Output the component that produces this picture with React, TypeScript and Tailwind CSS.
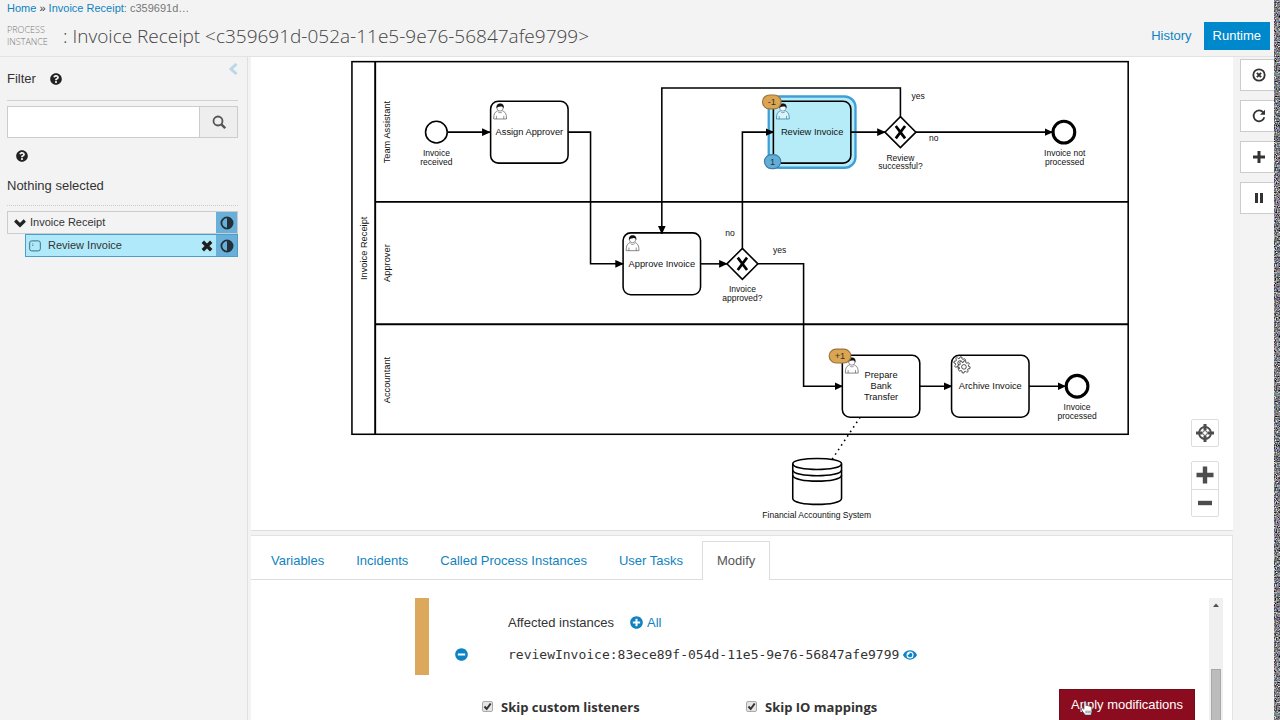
import { ReactNode, useState } from "react";
import { FaEye, FaMinusCircle, FaPlusCircle, FaQuestionCircle } from "react-icons/fa";

interface TaskProps {
  x: number;
  y: number;
  lines: string[];
  type?: "user" | "service";
  selected?: boolean;
}

interface LabelProps {
  x: number;
  y: number;
  lines: string[];
  size?: 11 | 12;
}

interface BadgeProps {
  x: number;
  y: number;
  width: number;
  text: string;
  fill: string;
  stroke: string;
}

const TABS = [
  "Variables",
  "Incidents",
  "Called Process Instances",
  "User Tasks",
  "Modify",
];

const FLOWS = [
  "M254 97H308",
  "M409 97H438V267H480",
  "M580 267H614",
  "M634 247V97H674",
  "M654 267H713V425H763",
  "M774 97H818",
  "M838 77V40H530V228",
  "M858 97H1034",
  "M863 425H904",
  "M1004 425H1051",
];

const TEETH = 8;

// outline of a cog wheel around 0,0: two outer and two inner points per tooth
const gearPath = (outer: number, inner: number) => {
  const step = (Math.PI * 2) / TEETH;
  const points: string[] = [];
  for (let i = 0; i < TEETH; i++) {
    [
      [outer, 0],
      [outer, 0.4],
      [inner, 0.52],
      [inner, 0.88],
    ].forEach(([r, offset]) => {
      const angle = (i + offset) * step;
      points.push(`${(Math.cos(angle) * r).toFixed(2)} ${(Math.sin(angle) * r).toFixed(2)}`);
    });
  }
  return `M${points.join("L")}z`;
};

const AdjustIcon = () => (
  <svg viewBox="0 0 14 14" className="size-3.5" fill="none">
    <circle cx="7" cy="7" r="5.6" stroke="#24303a" strokeWidth="1.8" />
    <path d="M7 1.4a5.6 5.6 0 0 1 0 11.2z" fill="#24303a" />
  </svg>
);

const ChevronLeftIcon = () => (
  <svg viewBox="0 0 12 12" className="size-3" fill="none" stroke="#bcd7ea">
    <path d="M10.500 1L5 6l5.500 5" strokeWidth="3" />
  </svg>
);

const ChevronDownIcon = () => (
  <svg viewBox="0 0 12 12" className="size-3" fill="none" stroke="#222">
    <path d="M1.200 3.500L6 8.200l4.800-4.700" strokeWidth="3.200" />
  </svg>
);

const RemoveIcon = () => (
  <svg viewBox="0 0 12 12" className="size-3" fill="none" stroke="#1d1d1d">
    <path d="M1.800 1.800l8.400 8.400M10.200 1.800l-8.400 8.400" strokeWidth="3.400" />
  </svg>
);

const SearchIcon = () => (
  <svg viewBox="0 0 14 14" className="size-3.5" fill="none" stroke="#555">
    <circle cx="6" cy="6" r="4.5" strokeWidth="1.8" />
    <path d="M9.2 9.2l4 4" strokeWidth="2.4" />
  </svg>
);

const CancelIcon = () => (
  <svg viewBox="0 0 14 14" className="size-3.5" fill="none" stroke="#333">
    <circle cx="7" cy="7" r="5.7" strokeWidth="1.8" />
    <path d="M4.9 4.9l4.2 4.2M9.1 4.9L4.9 9.1" strokeWidth="2" />
  </svg>
);

const RepeatIcon = () => (
  <svg viewBox="0 0 14 14" className="size-3.5" fill="none">
    <path
      d="M11.2 3.4A5.4 5.4 0 1 0 12.3 8.2"
      stroke="#333"
      strokeWidth="1.8"
    />
    <path d="M13 .8v5H8z" fill="#333" />
  </svg>
);

const PlusIcon = () => (
  <svg viewBox="0 0 14 14" className="size-3.5" stroke="#333">
    <path d="M7 1v12M1 7h12" strokeWidth="3" />
  </svg>
);

const PauseIcon = () => (
  <svg viewBox="0 0 14 14" className="size-3.5" fill="#333">
    <path d="M3 2h3v10H3zM8 2h3v10H8z" />
  </svg>
);

const TargetIcon = () => (
  <svg viewBox="0 0 20 20" className="size-5" fill="none" stroke="#4d4d4d">
    <circle cx="10" cy="10" r="6" strokeWidth="1.8" />
    <circle cx="10" cy="10" r="2.4" strokeWidth="1" />
    <path d="M10 1v6M10 13v6M1 10h6M13 10h6" strokeWidth="3" />
  </svg>
);

const ZoomInIcon = () => (
  <svg viewBox="0 0 20 20" className="size-5" stroke="#4d4d4d">
    <path d="M10 1.500v17M1.500 10h17" strokeWidth="4.400" />
  </svg>
);

const ZoomOutIcon = () => (
  <svg viewBox="0 0 20 20" className="size-5" stroke="#4d4d4d">
    <path d="M3 10h14" strokeWidth="4.4" />
  </svg>
);

const HandCursor = () => (
  <svg
    viewBox="0 0 14 18"
    className="pointer-events-none absolute top-2.5 left-5 h-4 w-3.5"
    fill="#fff"
    stroke="#333"
    strokeWidth=".8"
  >
    <path d="M3.5 10V2.2C3.5.6 6 .6 6 2.2V6.5c.6-.8 2-.6 2.3.3.7-.6 1.9-.3 2.1.6.8-.5 2.1 0 2.1 1.2V13c0 1.5-.8 2-.8 4H4.6c0-1.6-1.7-2.4-3-4.6-.8-1.4-1.4-2.4-.7-3 .9-.7 1.8 0 2.6 1z" />
    <path d="M6 12v3M8.2 12v3M10.4 12v3" />
  </svg>
);

const UserGlyph = ({ x, y, color }: { x: number; y: number; color: string }) => (
  <g transform={`translate(${x} ${y})`} fill="#fff" stroke={color}>
    <path
      d="M6 9.5C3 11 1 12.5 1 20h16.500c0-7.500-2-9-5-10.500"
      strokeWidth=".9"
      fillOpacity=".5"
    />
    <path d="M4.500 20v-4M14 20v-4M6.500 10.500c1.500 2 4 2 5.500 0" strokeWidth=".8" fill="none" />
    <circle cx="9.200" cy="5.800" r="4" strokeWidth=".8" />
    <path
      d="M4.600 6.500C4 2.500 6 0 9.300 0s5.500 2.500 4.700 6.500c-1-2.500-2-3-4.500-2.600-2.500.3-4 .6-4.900 2.600z"
      fill="#111"
      stroke="none"
    />
  </g>
);

const GearGlyph = ({ x, y }: { x: number; y: number }) => (
  <g transform={`translate(${x} ${y})`} fill="#fff" stroke="#222" strokeWidth="1">
    <g transform="translate(8 8)">
      <path d={gearPath(8, 6)} />
      <circle r="3" />
    </g>
    <g transform="translate(13 13)">
      <path d={gearPath(8, 6)} />
      <circle r="3" />
    </g>
  </g>
);

const Label = ({ x, y, lines, size = 11 }: LabelProps) => (
  <text
    textAnchor="middle"
    className={size === 12 ? "text-[12px]" : "text-[11px]"}
    fill="#111"
  >
    {lines.map((line, i) => (
      <tspan key={line} x={x} y={y + i * (size === 12 ? 14 : 11)}>
        {line}
      </tspan>
    ))}
  </text>
);

const LaneLabel = ({ x, y, text }: { x: number; y: number; text: string }) => (
  <text
    transform={`translate(${x} ${y}) rotate(-90)`}
    textAnchor="middle"
    className="text-[12px]"
    fill="#111"
  >
    {text}
  </text>
);

const Task = ({ x, y, lines, type = "user", selected }: TaskProps) => (
  <g>
    {selected ? (
      <rect
        x={x - 6}
        y={y - 6}
        width="112"
        height="92"
        rx="14"
        fill="#b5ecf8"
        stroke="#3f9fd8"
        strokeWidth="3"
      />
    ) : null}
    <rect
      x={x}
      y={y}
      width="100"
      height="80"
      rx="10"
      fill={selected ? "#b5ecf8" : "#fff"}
      stroke="#000"
      strokeWidth="2"
    />
    {type === "user" ? (
      <UserGlyph x={x + 3} y={y + 3} color={selected ? "#2d6f95" : "#555"} />
    ) : (
      <GearGlyph x={x + 3} y={y + 2} />
    )}
    <Label x={x + 50} y={y + 44 - (lines.length - 1) * 7} lines={lines} size={12} />
  </g>
);

const Gateway = ({ x, y }: { x: number; y: number }) => (
  <g transform={`translate(${x} ${y})`}>
    <path d="M0-20L20 0L0 20L-20 0z" fill="#fff" stroke="#000" strokeWidth="2" />
    <path d="M-6-8L6 8M6-8L-6 8" stroke="#000" strokeWidth="3.500" />
  </g>
);

const Badge = ({ x, y, width, text, fill, stroke }: BadgeProps) => (
  <g>
    <rect
      x={x - width / 2}
      y={y - 9}
      width={width}
      height="18"
      rx="9"
      fill={fill}
      stroke={stroke}
      strokeWidth="1.500"
    />
    <text x={x} y={y + 4} textAnchor="middle" className="text-[12px]" fill="#333">
      {text}
    </text>
  </g>
);

const Diagram = () => (
  <svg
    viewBox="0 0 1267 610"
    preserveAspectRatio="xMidYMin meet"
    className="block h-full w-full"
    role="img"
    aria-label="Invoice Receipt process"
  >
    <defs>
      <marker
        id="arrow"
        markerWidth="11"
        markerHeight="10"
        refX="10"
        refY="5"
        orient="auto"
        markerUnits="userSpaceOnUse"
      >
        <path d="M0 0L11 5L0 10z" />
      </marker>
    </defs>

    <g fill="none" stroke="#000" strokeWidth="2">
      <rect x="130" y="6" width="1002" height="481" />
      <path d="M160 6V487" strokeWidth="2.500" />
      <path d="M160 187H1132M160 345H1132" strokeWidth="2.500" />
    </g>
    <LaneLabel x={149} y={247} text="Invoice Receipt" />
    <LaneLabel x={179} y={97} text="Team Assistant" />
    <LaneLabel x={179} y={266} text="Approver" />
    <LaneLabel x={179} y={417} text="Accountant" />

    <path
      d="M786 465L748 522"
      stroke="#000"
      strokeWidth="2"
      strokeDasharray="2 5"
    />
    <Task x={309} y={57} lines={["Assign Approver"]} />
    <Task x={480} y={227} lines={["Approve Invoice"]} />
    <Task x={674} y={57} lines={["Review Invoice"]} selected />
    <Task x={763} y={385} lines={["Prepare", "Bank", "Transfer"]} />
    <Task x={904} y={385} lines={["Archive Invoice"]} type="service" />

    <g fill="none" stroke="#000" strokeWidth="2">
      {FLOWS.map((d) => (
        <path key={d} d={d} markerEnd="url(#arrow)" />
      ))}
    </g>

    <circle cx="239" cy="97" r="14" fill="#fff" stroke="#000" strokeWidth="2" />
    <circle cx="1049" cy="97" r="14" fill="#fff" stroke="#000" strokeWidth="4" />
    <circle cx="1066" cy="425" r="14" fill="#fff" stroke="#000" strokeWidth="4" />
    <Gateway x={634} y={267} />
    <Gateway x={838} y={97} />

    <g fill="#fff" stroke="#000" strokeWidth="2">
      <path d="M699 525v45c0 10 63 10 63 0v-45c0-9-63-9-63 0z" />
      <path
        d="M699 525c0 10 63 10 63 0M699 533c0 10 63 10 63 0M699 540c0 10 63 10 63 0"
        fill="none"
      />
    </g>

    <Label x={239} y={128} lines={["Invoice", "received"]} />
    <Label x={838} y={134} lines={["Review", "successful?"]} />
    <Label x={1050} y={128} lines={["Invoice not", "processed"]} />
    <Label x={634} y={304} lines={["Invoice", "approved?"]} />
    <Label x={1066} y={456} lines={["Invoice", "processed"]} />
    <Label x={730} y={595} lines={["Financial Accounting System"]} />
    <Label x={861} y={54} lines={["yes"]} />
    <Label x={881} y={108} lines={["no"]} />
    <Label x={618} y={231} lines={["no"]} />
    <Label x={682} y={253} lines={["yes"]} />

    <Badge x={672} y={58} width={24} text="-1" fill="#dca552" stroke="#9a7440" />
    <Badge x={673} y={135} width={21} text="1" fill="#62aed8" stroke="#3d7fa8" />
    <Badge x={760} y={386} width={28} text="+1" fill="#dca552" stroke="#9a7440" />
  </svg>
);

const RailButton = ({ label, children }: { label: string; children: ReactNode }) => (
  <button
    type="button"
    aria-label={label}
    className="flex h-8 items-center border border-r-0 border-[#ccc] bg-white pl-[11px]"
  >
    {children}
  </button>
);

const CheckOption = ({ id, label }: { id: string; label: string }) => (
  <label
    htmlFor={id}
    className="flex items-center gap-2 font-['Open_Sans',sans-serif] text-[13px] leading-5 font-bold text-[#333]"
  >
    <span className="grid">
      <input
        id={id}
        type="checkbox"
        defaultChecked
        className="peer col-start-1 row-start-1 size-[11px] appearance-none rounded-xs border border-[#aaa] bg-[#e6e6e6]"
      />
      <svg
        viewBox="0 0 11 11"
        className="pointer-events-none col-start-1 row-start-1 hidden size-[11px] peer-checked:block"
        fill="none"
        stroke="#333"
        strokeWidth="2"
      >
        <path d="M2.500 5.500l2.200 2.500L8.700 2.500" />
      </svg>
    </span>
    {label}
  </label>
);

const Header = () => (
  <header className="flex h-[57px] flex-none flex-col border-b border-[#e3e3e3] pr-1 pl-[7px]">
    <nav aria-label="Breadcrumb" className="text-[11px] leading-4 text-[#777]">
      <a href="#home" className="text-[#0f83c0]">
        Home
      </a>{" "}
      <span className="text-[#333]">»</span>{" "}
      <a href="#definition" className="text-[#0f83c0]">
        Invoice Receipt
      </a>
      : c359691d…
    </nav>
    <div className="flex items-center justify-between">
      <h1 className="flex items-center font-['Open_Sans',sans-serif] text-[19px] leading-10 font-light text-[#444]">
        <span className="flex w-14 flex-col text-[9px] leading-3 text-[#777] uppercase">
          <span>Process</span>
          <span>Instance</span>
        </span>
        : Invoice Receipt &lt;c359691d-052a-11e5-9e76-56847afe9799&gt;
      </h1>
      <div className="flex items-center gap-3">
        <a href="#history" className="text-[#0f83c0]">
          History
        </a>
        <a href="#runtime" className="bg-[#0088cc] px-[9px] py-1 leading-5 text-white">
          Runtime
        </a>
      </div>
    </div>
  </header>
);

const Sidebar = () => (
  <aside className="w-[248px] flex-none border-r border-[#e0e0e0] pr-[9px] pl-[7px]">
    <div className="flex h-11 items-center border-b border-[#d2d2d2]">
      <h2>Filter</h2>
      <FaQuestionCircle className="ml-3.5 size-3 text-[#222]" />
      <button type="button" aria-label="Collapse" className="mb-5 ml-auto">
        <ChevronLeftIcon />
      </button>
    </div>
    <form className="mt-[5px] flex h-8 border border-[#ccc] bg-white">
      <input type="text" aria-label="Filter" className="min-w-0 flex-1 px-2 outline-none" />
      <button
        type="button"
        aria-label="Search"
        className="flex w-[38px] items-center justify-center border-l border-[#ccc] bg-[#eee]"
      >
        <SearchIcon />
      </button>
    </form>
    <FaQuestionCircle className="mt-3 ml-[9px] size-3 text-[#222]" />
    <p className="mt-[15px] border-b border-dotted border-[#ccc] pb-2.5 leading-[18px]">
      Nothing selected
    </p>
    <ul className="mt-[5px] text-[11px]">
      <li>
        <div className="flex h-[23px] items-center border border-[#ccc] pl-1.5">
          <ChevronDownIcon />
          <span className="ml-1">Invoice Receipt</span>
          <span className="ml-auto flex h-full w-[21px] items-center justify-center bg-[#68b0d9]">
            <AdjustIcon />
          </span>
        </div>
        <ul className="pl-[18px]">
          <li className="flex h-[23px] items-center border border-[#4a9fcb] bg-[#b0eafa] pl-[3px]">
            <svg viewBox="0 0 12 12" className="size-3" fill="none" stroke="#3d6f85">
              <rect x=".7" y=".9" width="10.600" height="10" rx="2" />
              <path d="M3 4h1.500M3 5.500h1.500" strokeWidth=".6" />
            </svg>
            <span className="ml-[7px]">Review Invoice</span>
            <button type="button" aria-label="Deselect" className="mr-[3px] ml-auto">
              <RemoveIcon />
            </button>
            <span className="flex h-full w-[21px] items-center justify-center bg-[#68b0d9]">
              <AdjustIcon />
            </span>
          </li>
        </ul>
      </li>
    </ul>
  </aside>
);

const ModifyPanel = () => (
  <div className="flex min-h-0 flex-1 justify-between overflow-hidden pt-[18px] pr-[9px] pl-[164px]">
    <div className="flex-1">
      <div className="flex h-[77px]">
        <div className="w-3.5 bg-[#dca95c]" />
        <div className="flex w-16 items-end justify-center pb-3.5">
          <button type="button" aria-label="Remove">
            <FaMinusCircle className="block size-[13px] text-[#0d83c4]" />
          </button>
        </div>
        <div className="ml-[15px] pt-[15px]">
          <div className="flex items-center leading-5">
            Affected instances
            <button type="button" className="ml-4 flex items-center gap-1 text-[#0f83c0]">
              <FaPlusCircle className="size-[13px]" />
              All
            </button>
          </div>
          <div className="mt-3 flex items-center leading-5">
            <code className="font-['DejaVu_Sans_Mono',monospace] text-[13px]">
              reviewInvoice:83ece89f-054d-11e5-9e76-56847afe9799
            </code>
            <FaEye className="ml-1 size-3.5 text-[#0d83c4]" />
          </div>
        </div>
      </div>
      <div className="mt-3.5 flex items-start pr-3.5 pl-[67px]">
        <div className="w-[264px] pt-2">
          <CheckOption id="skip-listeners" label="Skip custom listeners" />
        </div>
        <div className="pt-2">
          <CheckOption id="skip-io" label="Skip IO mappings" />
        </div>
        <button
          type="button"
          className="relative ml-auto h-8 border border-[#6e0d1b] bg-[#8b0c1e] px-[11px] text-white"
        >
          Apply modifications
          <HandCursor />
        </button>
      </div>
    </div>
    <div className="flex w-3.5 flex-col items-center bg-[#f0f0f0]">
      <svg viewBox="0 0 14 14" className="size-3.5" fill="#505050">
        <path d="M4 9h6L7 5.500z" />
      </svg>
      <div className="mt-[57px] w-2.5 flex-1 border border-b-0 border-[#a8a8a8] bg-[#bcbcbc]" />
    </div>
  </div>
);

const App = () => {
  const [activeTab, setActiveTab] = useState("Modify");

  return (
    <div className="flex h-screen overflow-hidden bg-[#f3f3f3] font-['Liberation_Sans',Arial,sans-serif] text-[13px] text-[#333]">
      <div className="flex min-w-0 flex-1 flex-col">
        <Header />
        <div className="flex min-h-0 flex-1">
          <Sidebar />
          <main className="ml-[3px] flex min-w-0 flex-1 flex-col">
            <section className="relative min-h-0 flex-[474] border-b border-[#dedede] bg-white">
              <Diagram />
              <div className="absolute right-3.5 bottom-[13px] flex flex-col gap-3.5">
                <button
                  type="button"
                  aria-label="Reset view"
                  className="flex size-7 items-center justify-center rounded-xs border border-[#ddd] bg-white"
                >
                  <TargetIcon />
                </button>
                <div className="flex flex-col rounded-xs border border-[#ddd] bg-white">
                  <button
                    type="button"
                    aria-label="Zoom in"
                    className="flex h-7 w-[26px] items-center justify-center border-b border-[#ddd]"
                  >
                    <ZoomInIcon />
                  </button>
                  <button
                    type="button"
                    aria-label="Zoom out"
                    className="flex h-[26px] w-[26px] items-center justify-center"
                  >
                    <ZoomOutIcon />
                  </button>
                </div>
              </div>
            </section>
            <section className="mt-1 flex min-h-0 flex-[185] flex-col border-t border-r border-[#e3e3e3] bg-white">
              <div role="tablist" className="flex border-b border-[#ddd] pt-[5px] pl-1">
                {TABS.map((tab) => (
                  <button
                    key={tab}
                    type="button"
                    role="tab"
                    aria-selected={tab === activeTab}
                    onClick={() => setActiveTab(tab)}
                    className={
                      tab === activeTab
                        ? "-mb-px ml-[3px] border border-b-0 border-[#ddd] bg-white px-3.5 py-2 leading-[22px] text-[#555]"
                        : "border border-b-0 border-transparent px-[15px] py-2 leading-[21px] text-[#0f83c0]"
                    }
                  >
                    {tab}
                  </button>
                ))}
              </div>
              <ModifyPanel />
            </section>
          </main>
          <div className="ml-[7px] flex w-[34px] flex-none flex-col gap-[9px] pt-0.5">
            <RailButton label="Cancel instance">
              <CancelIcon />
            </RailButton>
            <RailButton label="Retry">
              <RepeatIcon />
            </RailButton>
            <RailButton label="Add variable">
              <PlusIcon />
            </RailButton>
            <RailButton label="Suspend">
              <PauseIcon />
            </RailButton>
          </div>
        </div>
      </div>
      <svg className="h-full w-1.5 flex-none" aria-hidden="true">
        <filter
          id="static"
          x="0"
          y="0"
          width="100%"
          height="100%"
          colorInterpolationFilters="sRGB"
        >
          <feTurbulence type="fractalNoise" baseFrequency="0.8" numOctaves="2" seed="4" />
          <feColorMatrix values="1.400 .7 .3 0 -.72 .7 1.400 .3 0 -.72 .5 .7 1.200 0 -.7 0 0 0 0 1" />
        </filter>
        <rect width="100%" height="100%" filter="url(#static)" />
      </svg>
    </div>
  );
};

export default App;
